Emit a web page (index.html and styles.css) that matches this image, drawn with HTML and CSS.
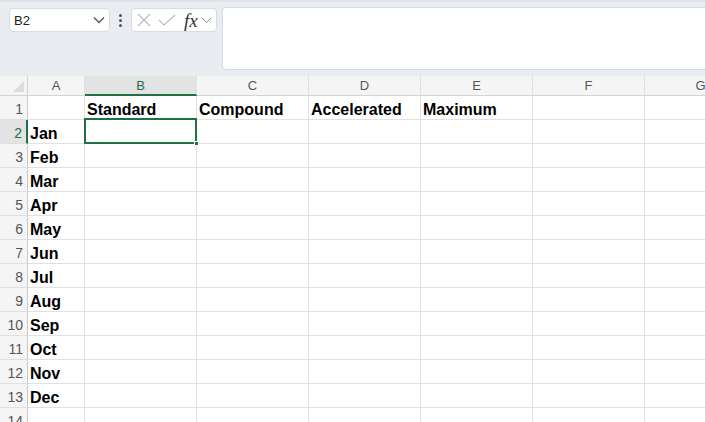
FILE: index.html
```html
<!DOCTYPE html>
<html lang="en">
<head>
    <meta charset="UTF-8">
    <title>Sheet</title>
    <link rel="stylesheet" href="styles.css">
</head>
<body>
    <div class="toolbar">
        <div class="name-box">
            <span>B2</span>
            <svg width="12" height="8" viewBox="0 0 12 8"><path d="M1 1.5 L6 6.5 L11 1.5" fill="none" stroke="#555" stroke-width="1.3"/></svg>
        </div>
        <div class="dots"><i></i><i></i><i></i></div>
        <div class="fx-box">
            <svg width="16" height="16" viewBox="0 0 16 16"><path d="M2 2 L14 14 M14 2 L2 14" stroke="#bcbcbc" stroke-width="1.2"/></svg>
            <svg width="18" height="16" viewBox="0 0 18 16"><path d="M1 8 L6 13 L17 3" fill="none" stroke="#bcbcbc" stroke-width="1.2"/></svg>
            <span class="fx">fx</span>
            <svg width="11" height="7" viewBox="0 0 11 7"><path d="M1 1 L5.5 5.5 L10 1" fill="none" stroke="#888" stroke-width="1"/></svg>
        </div>
        <div class="formula-input"></div>
    </div>
    <div class="sheet">
        <div class="corner"></div>
        <div class="col-head">A</div>
        <div class="col-head active">B</div>
        <div class="col-head">C</div>
        <div class="col-head">D</div>
        <div class="col-head">E</div>
        <div class="col-head">F</div>
        <div class="col-head">G</div>

        <div class="row-head">1</div>
        <div class="cell"></div><div class="cell">Standard</div><div class="cell">Compound</div><div class="cell">Accelerated</div><div class="cell">Maximum</div><div class="cell"></div><div class="cell"></div>

        <div class="row-head active">2</div>
        <div class="cell">Jan</div><div class="cell selected"></div><div class="cell"></div><div class="cell"></div><div class="cell"></div><div class="cell"></div><div class="cell"></div>

        <div class="row-head">3</div>
        <div class="cell">Feb</div><div class="cell"></div><div class="cell"></div><div class="cell"></div><div class="cell"></div><div class="cell"></div><div class="cell"></div>

        <div class="row-head">4</div>
        <div class="cell">Mar</div><div class="cell"></div><div class="cell"></div><div class="cell"></div><div class="cell"></div><div class="cell"></div><div class="cell"></div>

        <div class="row-head">5</div>
        <div class="cell">Apr</div><div class="cell"></div><div class="cell"></div><div class="cell"></div><div class="cell"></div><div class="cell"></div><div class="cell"></div>

        <div class="row-head">6</div>
        <div class="cell">May</div><div class="cell"></div><div class="cell"></div><div class="cell"></div><div class="cell"></div><div class="cell"></div><div class="cell"></div>

        <div class="row-head">7</div>
        <div class="cell">Jun</div><div class="cell"></div><div class="cell"></div><div class="cell"></div><div class="cell"></div><div class="cell"></div><div class="cell"></div>

        <div class="row-head">8</div>
        <div class="cell">Jul</div><div class="cell"></div><div class="cell"></div><div class="cell"></div><div class="cell"></div><div class="cell"></div><div class="cell"></div>

        <div class="row-head">9</div>
        <div class="cell">Aug</div><div class="cell"></div><div class="cell"></div><div class="cell"></div><div class="cell"></div><div class="cell"></div><div class="cell"></div>

        <div class="row-head">10</div>
        <div class="cell">Sep</div><div class="cell"></div><div class="cell"></div><div class="cell"></div><div class="cell"></div><div class="cell"></div><div class="cell"></div>

        <div class="row-head">11</div>
        <div class="cell">Oct</div><div class="cell"></div><div class="cell"></div><div class="cell"></div><div class="cell"></div><div class="cell"></div><div class="cell"></div>

        <div class="row-head">12</div>
        <div class="cell">Nov</div><div class="cell"></div><div class="cell"></div><div class="cell"></div><div class="cell"></div><div class="cell"></div><div class="cell"></div>

        <div class="row-head">13</div>
        <div class="cell">Dec</div><div class="cell"></div><div class="cell"></div><div class="cell"></div><div class="cell"></div><div class="cell"></div><div class="cell"></div>

        <div class="row-head">14</div>
        <div class="cell"></div><div class="cell"></div><div class="cell"></div><div class="cell"></div><div class="cell"></div><div class="cell"></div><div class="cell"></div>
    </div>
</body>
</html>
```

FILE: styles.css
```css
body {
    margin: 0;
    padding: 0;
    width: 705px;
    height: 422px;
    overflow: hidden;
    background: #fff;
    font-family: 'Liberation Sans', Arial, sans-serif;
}
.toolbar {
    height: 76px;
    background: #e9ecf0;
    border-top: 2px solid #dfe2e6;
    box-sizing: border-box;
    display: flex;
    align-items: flex-start;
    padding: 5px 0 0 9px;
}
.name-box {
    width: 101px;
    height: 24px;
    box-sizing: border-box;
    margin-top: 1px;
    background: #fff;
    border: 1px solid #d8dbdf;
    border-radius: 4px;
    display: flex;
    align-items: center;
    justify-content: space-between;
    padding: 0 4px 0 4px;
    font-size: 13px;
    color: #222;
}
.dots {
    width: 21px;
    height: 24px;
    margin-top: 1px;
    display: flex;
    flex-direction: column;
    align-items: center;
    justify-content: center;
    gap: 2px;
}
.dots i {
    width: 3px;
    height: 3px;
    border-radius: 50%;
    background: #555;
}
.fx-box {
    width: 86px;
    height: 24px;
    box-sizing: border-box;
    margin-top: 1px;
    background: #fff;
    border: 1px solid #d8dbdf;
    border-radius: 4px;
    display: flex;
    align-items: center;
    padding: 0 3px 0 4px;
    gap: 6px;
}
.fx-box .fx {
    font-family: 'Liberation Serif', serif;
    font-style: italic;
    font-size: 19px;
    line-height: 1;
    color: #333;
    margin-left: 2px;
    margin-right: -3px;
}
.formula-input {
    flex: 1;
    height: 63px;
    margin-left: 5px;
    background: #fff;
    border: 1px solid #d8dbdf;
    border-right: none;
    border-radius: 4px 0 0 4px;
    box-sizing: border-box;
}
.sheet {
    display: grid;
    grid-template-columns: 28px 57px repeat(6, 112px);
    grid-template-rows: 20px repeat(14, 24px);
    font-size: 16px;
}
.corner {
    background: #f5f5f5;
    border-right: 1px solid #d4d4d4;
    border-bottom: 1px solid #d4d4d4;
    position: relative;
}
.corner::after {
    content: '';
    position: absolute;
    right: 3px;
    bottom: 3px;
    border-left: 11px solid transparent;
    border-bottom: 11px solid #dcdcdc;
}
.col-head {
    background: #f5f5f5;
    border-right: 1px solid #e0e0e0;
    border-bottom: 1px solid #d4d4d4;
    display: flex;
    align-items: center;
    justify-content: center;
    font-size: 13px;
    color: #555;
}
.col-head.active {
    background: #e3e3e3;
    color: #1e7145;
    border-bottom: 2px solid #1e7145;
}
.row-head {
    background: #f5f5f5;
    border-right: 1px solid #c8c8c8;
    border-bottom: 1px solid #e0e0e0;
    display: flex;
    align-items: center;
    justify-content: flex-end;
    padding: 3px 4px 0 0;
    box-sizing: border-box;
    font-size: 14px;
    color: #555;
}
.row-head.active {
    background: #e3e3e3;
    color: #1e7145;
    border-right: 2px solid #1e7145;
}
.cell {
    border-right: 1px solid #e1e1e1;
    border-bottom: 1px solid #e1e1e1;
    display: flex;
    align-items: center;
    padding: 4px 0 0 2px;
    box-sizing: border-box;
    font-weight: bold;
    color: #000;
    white-space: nowrap;
}
.cell.selected {
    position: relative;
}
.cell.selected::before {
    content: '';
    position: absolute;
    left: -1px;
    top: -2px;
    right: -1px;
    bottom: -1px;
    border: 2px solid #1e7145;
}
.cell.selected::after {
    content: '';
    position: absolute;
    right: -3px;
    bottom: -3px;
    width: 5px;
    height: 5px;
    background: #1e7145;
    border: 1px solid #fff;
    box-sizing: border-box;
}
```
